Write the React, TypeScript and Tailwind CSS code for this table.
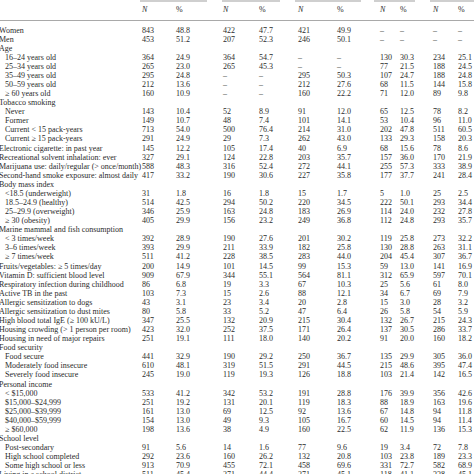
import React from 'react';

type Row = { label: string; indent?: boolean; heading?: boolean; v?: string[] };

const D = '–';

const rows: Row[] = [
  { label: 'Women', v: ['843', '48.8', '422', '47.7', '421', '49.9', D, D, D, D] },
  { label: 'Men', v: ['453', '51.2', '207', '52.3', '246', '50.1', D, D, D, D] },
  { label: 'Age', heading: true },
  { label: '16–24 years old', indent: true, v: ['364', '24.9', '364', '54.7', D, D, '130', '30.3', '234', '25.1'] },
  { label: '25–34 years old', indent: true, v: ['265', '23.0', '265', '45.3', D, D, '77', '21.5', '188', '24.5'] },
  { label: '35–49 years old', indent: true, v: ['295', '24.8', D, D, '295', '50.3', '107', '24.7', '188', '24.8'] },
  { label: '50–59 years old', indent: true, v: ['212', '13.6', D, D, '212', '27.6', '68', '11.5', '144', '15.8'] },
  { label: '≥ 60 years old', indent: true, v: ['160', '10.9', D, D, '160', '22.2', '71', '12.0', '89', '9.8'] },
  { label: 'Tobacco smoking', heading: true },
  { label: 'Never', indent: true, v: ['143', '10.4', '52', '8.9', '91', '12.0', '65', '12.5', '78', '8.2'] },
  { label: 'Former', indent: true, v: ['149', '10.7', '48', '7.4', '101', '14.1', '53', '10.4', '96', '11.0'] },
  { label: 'Current < 15 pack-years', indent: true, v: ['713', '54.0', '500', '76.4', '214', '31.0', '202', '47.8', '511', '60.5'] },
  { label: 'Current ≥ 15 pack-years', indent: true, v: ['291', '24.9', '29', '7.3', '262', '43.0', '133', '29.3', '158', '20.3'] },
  { label: 'Electronic cigarette: in past year', v: ['145', '12.2', '105', '17.4', '40', '6.9', '68', '15.6', '78', '8.6'] },
  { label: 'Recreational solvent inhalation: ever', v: ['327', '29.1', '124', '22.8', '203', '35.7', '157', '36.0', '170', '21.9'] },
  { label: 'Marijuana use: daily/regular (> once/month)', v: ['588', '48.3', '316', '52.4', '272', '44.1', '255', '57.3', '333', '38.9'] },
  { label: 'Second-hand smoke exposure: almost daily', v: ['417', '33.2', '190', '30.6', '227', '35.8', '177', '37.7', '241', '28.4'] },
  { label: 'Body mass index', heading: true },
  { label: '<18.5 (underweight)', indent: true, v: ['31', '1.8', '16', '1.8', '15', '1.7', '5', '1.0', '25', '2.5'] },
  { label: '18.5–24.9 (healthy)', indent: true, v: ['514', '42.5', '294', '50.2', '220', '34.5', '222', '50.1', '293', '34.4'] },
  { label: '25–29.9 (overweight)', indent: true, v: ['346', '25.9', '163', '24.8', '183', '26.9', '114', '24.0', '232', '27.8'] },
  { label: '≥ 30 (obesity)', indent: true, v: ['405', '29.9', '156', '23.2', '249', '36.8', '112', '24.8', '293', '35.7'] },
  { label: 'Marine mammal and fish consumption', heading: true },
  { label: '< 3 times/week', indent: true, v: ['392', '28.9', '190', '27.6', '201', '30.2', '119', '25.8', '273', '32.2'] },
  { label: '3–6 times/week', indent: true, v: ['393', '29.9', '211', '33.9', '182', '25.8', '130', '28.8', '263', '31.1'] },
  { label: '≥ 7 times/week', indent: true, v: ['511', '41.2', '228', '38.5', '283', '44.0', '204', '45.4', '307', '36.7'] },
  { label: 'Fruits/vegetables: ≥ 5 times/day', v: ['200', '14.9', '101', '14.5', '99', '15.3', '59', '13.0', '141', '16.9'] },
  { label: 'Vitamin D: sufficient blood level', v: ['909', '67.9', '344', '55.1', '564', '81.1', '312', '65.9', '597', '70.1'] },
  { label: 'Respiratory infection during childhood', v: ['86', '6.8', '19', '3.3', '67', '10.3', '25', '5.6', '61', '8.0'] },
  { label: 'Active TB in the past', v: ['103', '7.3', '15', '2.6', '88', '12.1', '34', '6.7', '69', '7.9'] },
  { label: 'Allergic sensitization to dogs', v: ['43', '3.1', '23', '3.4', '20', '2.8', '15', '3.0', '28', '3.2'] },
  { label: 'Allergic sensitization to dust mites', v: ['80', '5.8', '33', '5.2', '47', '6.4', '26', '5.8', '54', '5.9'] },
  { label: 'High blood total IgE (≥ 100 kU/L)', v: ['347', '25.5', '132', '20.9', '215', '30.4', '132', '26.7', '215', '24.3'] },
  { label: 'Housing crowding (> 1 person per room)', v: ['423', '32.0', '252', '37.5', '171', '26.4', '137', '30.5', '286', '33.7'] },
  { label: 'Housing in need of major repairs', v: ['251', '19.1', '111', '18.0', '140', '20.2', '91', '20.0', '160', '18.2'] },
  { label: 'Food security', heading: true },
  { label: 'Food secure', indent: true, v: ['441', '32.9', '190', '29.2', '250', '36.7', '135', '29.9', '305', '36.0'] },
  { label: 'Moderately food insecure', indent: true, v: ['610', '48.1', '319', '51.5', '291', '44.5', '215', '48.6', '395', '47.4'] },
  { label: 'Severely food insecure', indent: true, v: ['245', '19.0', '119', '19.3', '126', '18.8', '103', '21.4', '142', '16.5'] },
  { label: 'Personal income', heading: true },
  { label: '< $15,000', indent: true, v: ['533', '41.2', '342', '53.2', '191', '28.8', '176', '39.9', '356', '42.6'] },
  { label: '$15,000–$24,999', indent: true, v: ['251', '19.2', '131', '20.1', '119', '18.3', '88', '18.9', '163', '19.6'] },
  { label: '$25,000–$39,999', indent: true, v: ['161', '13.0', '69', '12.5', '92', '13.6', '67', '14.8', '94', '11.8'] },
  { label: '$40,000–$59,999', indent: true, v: ['154', '13.0', '49', '9.3', '105', '16.7', '60', '14.5', '94', '11.4'] },
  { label: '≥ $60,000', indent: true, v: ['198', '13.6', '38', '4.9', '160', '22.5', '62', '11.9', '136', '15.3'] },
  { label: 'School level', heading: true },
  { label: 'Post-secondary', indent: true, v: ['91', '5.6', '14', '1.6', '77', '9.6', '19', '3.4', '72', '7.8'] },
  { label: 'High school completed', indent: true, v: ['292', '23.6', '160', '26.2', '132', '20.8', '103', '23.8', '189', '23.3'] },
  { label: 'Some high school or less', indent: true, v: ['913', '70.9', '455', '72.1', '458', '69.6', '331', '72.7', '582', '68.9'] },
  { label: 'Living in a school district', v: ['511', '45.4', '271', '44.4', '271', '45.1', '118', '41.1', '338', '45.1'] },
];

const cols =
  'grid grid-cols-[142px_34px_47px_36px_39px_39px_43px_20px_33px_25px_40px]';

export default function App() {
  return (
    <div
      className="h-[474px] w-[474px] overflow-hidden bg-white text-[8px] text-[#2b2b2b]"
      style={{ fontFamily: '"Liberation Serif", "Times New Roman", serif' }}
    >
      {/* spanner rules of the column groups */}
      <div className="flex h-[1.5px]">
        <div className="ml-[140px] w-[68px] bg-[#cfcfcf]" />
        <div className="ml-[15px] w-[60px] bg-[#cfcfcf]" />
        <div className="ml-[15px] w-[67px] bg-[#cfcfcf]" />
        <div className="ml-[13px] w-[42px] bg-[#cfcfcf]" />
        <div className="ml-[15px] w-[45px] bg-[#cfcfcf]" />
      </div>

      {/* header */}
      <div className={`${cols} h-[17px] items-center`}>
        <div />
        {['N', '%', 'N', '%', 'N', '%', 'N', '%', 'N', '%'].map((h, i) => (
          <div key={i} className={h === 'N' ? 'italic' : ''}>
            {h}
          </div>
        ))}
      </div>

      <div className="mt-px h-[1.5px] bg-[#a9a9a9]" />

      <div className="pt-[4.5px]">
        {rows.map((r, i) => (
          <div key={i} className={`${cols} h-[9.08px] leading-[9.08px]`}>
            <div className={`whitespace-nowrap ${r.indent ? 'pl-[5px]' : '-ml-px'}`}>{r.label}</div>
            {(r.v ?? []).map((c, j) => (
              <div key={j} className="whitespace-nowrap">
                {c}
              </div>
            ))}
          </div>
        ))}
      </div>
    </div>
  );
}
